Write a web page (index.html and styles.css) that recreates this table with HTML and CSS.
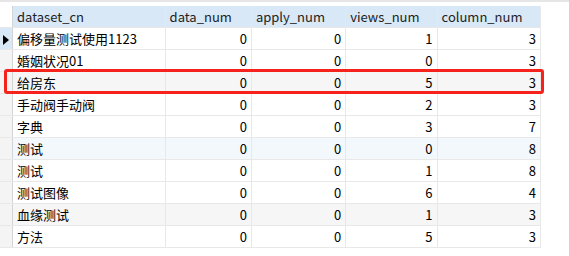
FILE: index.html
```html
<!DOCTYPE html>
<html lang="zh-CN">
<head>
    <meta charset="UTF-8">
    <title>dataset</title>
    <link rel="stylesheet" href="styles.css">
</head>
<body>
    <div class="grid-wrap">
        <table class="grid">
            <thead>
                <tr>
                    <th class="ind"></th>
                    <th class="c-name">dataset_cn</th>
                    <th class="c-data">data_num</th>
                    <th class="c-apply">apply_num</th>
                    <th class="c-views">views_num</th>
                    <th class="c-col">column_num</th>
                </tr>
            </thead>
            <tbody>
                <tr class="current">
                    <td class="ind"><span class="arrow"></span></td>
                    <td>偏移量测试使用1123</td><td class="num">0</td><td class="num">0</td><td class="num">1</td><td class="num">3</td>
                </tr>
                <tr>
                    <td class="ind"></td>
                    <td>婚姻状况01</td><td class="num">0</td><td class="num">0</td><td class="num">0</td><td class="num">3</td>
                </tr>
                <tr class="alt marked">
                    <td class="ind"></td>
                    <td>给房东</td><td class="num">0</td><td class="num">0</td><td class="num">5</td><td class="num">3</td>
                </tr>
                <tr>
                    <td class="ind"></td>
                    <td>手动阀手动阀</td><td class="num">0</td><td class="num">0</td><td class="num">2</td><td class="num">3</td>
                </tr>
                <tr>
                    <td class="ind"></td>
                    <td>字典</td><td class="num">0</td><td class="num">0</td><td class="num">3</td><td class="num">7</td>
                </tr>
                <tr class="hover">
                    <td class="ind"></td>
                    <td>测试</td><td class="num">0</td><td class="num">0</td><td class="num">0</td><td class="num">8</td>
                </tr>
                <tr>
                    <td class="ind"></td>
                    <td>测试</td><td class="num">0</td><td class="num">0</td><td class="num">1</td><td class="num">8</td>
                </tr>
                <tr>
                    <td class="ind"></td>
                    <td>测试图像</td><td class="num">0</td><td class="num">0</td><td class="num">6</td><td class="num">4</td>
                </tr>
                <tr class="alt">
                    <td class="ind"></td>
                    <td>血缘测试</td><td class="num">0</td><td class="num">0</td><td class="num">1</td><td class="num">3</td>
                </tr>
                <tr>
                    <td class="ind"></td>
                    <td>方法</td><td class="num">0</td><td class="num">0</td><td class="num">5</td><td class="num">3</td>
                </tr>
            </tbody>
        </table>
        <div class="highlight"></div>
    </div>
</body>
</html>
```

FILE: styles.css
```css
body {
    margin: 0;
    background-color: #ffffff;
    font-family: "Noto Sans CJK SC", "Noto Sans", sans-serif;
    font-size: 13px;
    color: #000;
}

.grid-wrap {
    position: relative;
    border-top: 2px solid #e6e6e6;
    padding-top: 4px;
}

.grid {
    border-collapse: collapse;
    table-layout: fixed;
    width: 541px;
}

.grid th,
.grid td {
    height: 21px;
    padding: 0 4px;
    border: 1px solid #e8e8e8;
    white-space: nowrap;
    overflow: hidden;
    line-height: 21px;
}

.grid th {
    background-color: #d9e8f6;
    font-weight: normal;
    text-align: left;
    color: #222;
    border-top: none;
    height: 20px;
}

.grid th:first-child,
.grid td:first-child {
    border-left: none;
}

.grid .ind {
    width: 6px;
    padding: 0 3px;
    background-color: #f4f4f4;
    position: relative;
    border-right: 1px solid #d4d4d4;
}

.grid th.ind {
    background-color: #ffffff;
}

.c-name { width: 143px; }
.c-data { width: 77px; }
.c-apply { width: 85px; }
.c-views { width: 82px; }
.c-col { width: 94px; }

.grid td.num {
    text-align: right;
}

.grid tr.current .ind {
    background-color: #d9e8f6;
}

.arrow {
    display: inline-block;
    width: 0;
    height: 0;
    border-top: 5px solid transparent;
    border-bottom: 5px solid transparent;
    border-left: 6px solid #000;
    vertical-align: middle;
}

.grid tr.alt td {
    background-color: #f6f6f6;
}

.grid tr.hover td {
    background-color: #f3f8fc;
}

.grid tr.alt td.ind,
.grid tr.hover td.ind {
    background-color: #f4f4f4;
}

/* red frame drawn over the third row */
.highlight {
    position: absolute;
    left: 4px;
    top: 67px;
    width: 534px;
    height: 19px;
    border: 3px solid #f5231c;
    border-radius: 3px;
}
```
